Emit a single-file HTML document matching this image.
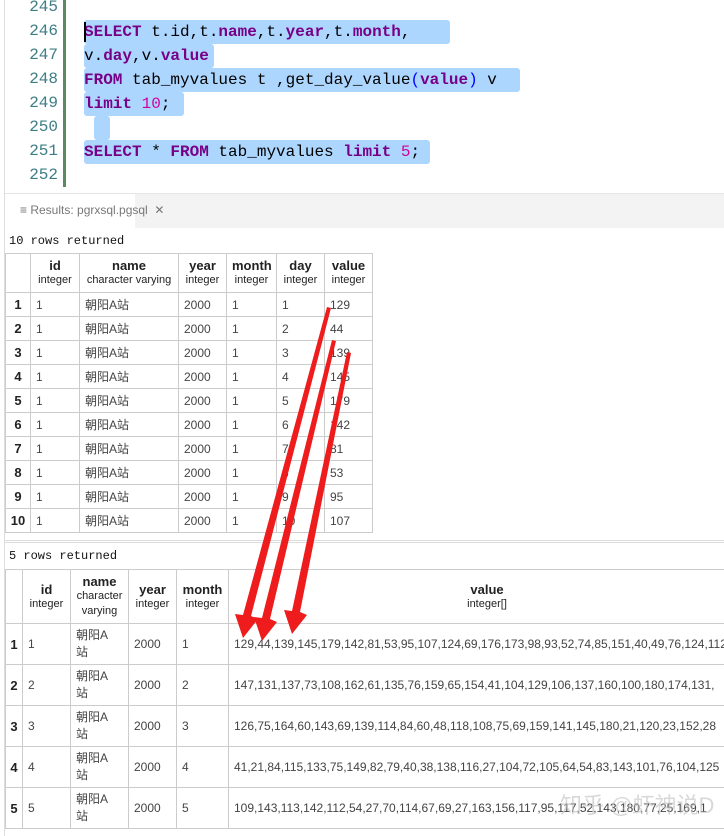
<!DOCTYPE html>
<html><head><meta charset="utf-8"><style>
*{margin:0;padding:0;box-sizing:border-box}
body{width:724px;height:836px;overflow:hidden;background:#fff;position:relative;font-family:"Liberation Sans","Noto Sans CJK SC",sans-serif;color:#333}
.ln{position:absolute;left:28px;width:30px;text-align:right;font:16px "Liberation Mono",monospace;color:#3d7d86;}
.code{position:absolute;left:84px;font:16px "Liberation Mono",monospace;color:#000;white-space:pre;height:24px;line-height:24px}
.sel{position:absolute;background:#add6ff;border-radius:3px}
.k{color:#770088;font-weight:bold}
.n{color:#d100a0}
.f{color:#0000ff}
table{position:absolute;border-collapse:collapse;font-size:12px;color:#444;table-layout:fixed}
td,th{border:1px solid #ccc;padding:0 5px;text-align:left;white-space:nowrap;overflow:hidden}
th{text-align:center;font-weight:bold;font-size:13px;color:#222;line-height:15px}
th span{display:block;font-weight:normal;font-size:11px;color:#222}
td.r{font-weight:bold;color:#222;font-size:13px;text-align:center;padding:0}
.mono{position:absolute;left:9px;font:12px "Liberation Mono",monospace;color:#111}
</style></head><body>
<div style="position:absolute;left:4px;top:0;width:1px;height:836px;background:#ddd"></div>
<div style="position:absolute;left:63px;top:0;width:3px;height:187px;background:#5b8a5e"></div>
<div class="sel" style="left:84px;top:20px;width:366px;height:24px"></div>
<div class="sel" style="left:84px;top:44px;width:130px;height:24px"></div>
<div class="sel" style="left:84px;top:68px;width:436px;height:24px"></div>
<div class="sel" style="left:84px;top:92px;width:100px;height:24px"></div>
<div class="sel" style="left:94px;top:116px;width:16px;height:24px"></div>
<div class="sel" style="left:84px;top:140px;width:346px;height:24px"></div>
<div class="ln" style="top:-2px">245</div>
<div class="ln" style="top:22px">246</div>
<div class="ln" style="top:46px">247</div>
<div class="ln" style="top:70px">248</div>
<div class="ln" style="top:94px">249</div>
<div class="ln" style="top:118px">250</div>
<div class="ln" style="top:142px">251</div>
<div class="ln" style="top:166px">252</div>
<div class="code" style="top:20px"><span class="k">SELECT</span> t.id,t.<span class="k">name</span>,t.<span class="k">year</span>,t.<span class="k">month</span>,</div>
<div class="code" style="top:44px">v.<span class="k">day</span>,v.<span class="k">value</span></div>
<div class="code" style="top:68px"><span class="k">FROM</span> tab_myvalues t ,get_day_value<span class="f">(</span><span class="k">value</span><span class="f">)</span> v</div>
<div class="code" style="top:92px"><span class="k">limit</span> <span class="n">10</span>;</div>
<div class="code" style="top:140px"><span class="k">SELECT</span> * <span class="k">FROM</span> tab_myvalues <span class="k">limit</span> <span class="n">5</span>;</div>
<div style="position:absolute;left:84px;top:22px;width:2px;height:20px;background:#000"></div>

<div style="position:absolute;left:5px;top:193px;width:719px;height:1px;background:#e5e5e5"></div>
<div style="position:absolute;left:135px;top:194px;width:589px;height:34px;background:#f3f3f3"></div>
<div style="position:absolute;left:20px;top:203px;font-size:12px;color:#777">≡ Results: pgrxsql.pgsql&nbsp; ✕</div>
<div class="mono" style="top:234px">10 rows returned</div>

<table style="left:5px;top:253px;width:367px">
<colgroup><col style="width:25px"><col style="width:49px"><col style="width:99px"><col style="width:48px"><col style="width:50px"><col style="width:48px"><col style="width:48px"></colgroup>
<tr style="height:39px"><th></th><th>id<span>integer</span></th><th>name<span>character varying</span></th><th>year<span>integer</span></th><th>month<span>integer</span></th><th>day<span>integer</span></th><th>value<span>integer</span></th></tr>
<tr style="height:24px"><td class="r">1</td><td>1</td><td>朝阳A站</td><td>2000</td><td>1</td><td>1</td><td>129</td></tr>
<tr style="height:24px"><td class="r">2</td><td>1</td><td>朝阳A站</td><td>2000</td><td>1</td><td>2</td><td>44</td></tr>
<tr style="height:24px"><td class="r">3</td><td>1</td><td>朝阳A站</td><td>2000</td><td>1</td><td>3</td><td>139</td></tr>
<tr style="height:24px"><td class="r">4</td><td>1</td><td>朝阳A站</td><td>2000</td><td>1</td><td>4</td><td>145</td></tr>
<tr style="height:24px"><td class="r">5</td><td>1</td><td>朝阳A站</td><td>2000</td><td>1</td><td>5</td><td>179</td></tr>
<tr style="height:24px"><td class="r">6</td><td>1</td><td>朝阳A站</td><td>2000</td><td>1</td><td>6</td><td>142</td></tr>
<tr style="height:24px"><td class="r">7</td><td>1</td><td>朝阳A站</td><td>2000</td><td>1</td><td>7</td><td>81</td></tr>
<tr style="height:24px"><td class="r">8</td><td>1</td><td>朝阳A站</td><td>2000</td><td>1</td><td>8</td><td>53</td></tr>
<tr style="height:24px"><td class="r">9</td><td>1</td><td>朝阳A站</td><td>2000</td><td>1</td><td>9</td><td>95</td></tr>
<tr style="height:24px"><td class="r">10</td><td>1</td><td>朝阳A站</td><td>2000</td><td>1</td><td>10</td><td>107</td></tr>
</table>
<div style="position:absolute;left:5px;top:540px;width:719px;height:3px;border-top:1px solid #ddd;border-bottom:1px solid #ddd"></div>
<div class="mono" style="top:549px">5 rows returned</div>

<table style="left:5px;top:569px;width:740px">
<colgroup><col style="width:17px"><col style="width:48px"><col style="width:58px"><col style="width:48px"><col style="width:52px"><col style="width:517px"></colgroup>
<tr style="height:54px"><th></th><th>id<span>integer</span></th><th style="padding:0">name<span>character</span><span>varying</span></th><th>year<span>integer</span></th><th>month<span>integer</span></th><th>value<span>integer[]</span></th></tr>
<tr style="height:41px"><td class="r">1</td><td>1</td><td style="white-space:normal;line-height:17px">朝阳A<br>站</td><td>2000</td><td>1</td><td>129,44,139,145,179,142,81,53,95,107,124,69,176,173,98,93,52,74,85,151,40,49,76,124,112</td></tr>
<tr style="height:41px"><td class="r">2</td><td>2</td><td style="white-space:normal;line-height:17px">朝阳A<br>站</td><td>2000</td><td>2</td><td>147,131,137,73,108,162,61,135,76,159,65,154,41,104,129,106,137,160,100,180,174,131,</td></tr>
<tr style="height:41px"><td class="r">3</td><td>3</td><td style="white-space:normal;line-height:17px">朝阳A<br>站</td><td>2000</td><td>3</td><td>126,75,164,60,143,69,139,114,84,60,48,118,108,75,69,159,141,145,180,21,120,23,152,28</td></tr>
<tr style="height:41px"><td class="r">4</td><td>4</td><td style="white-space:normal;line-height:17px">朝阳A<br>站</td><td>2000</td><td>4</td><td>41,21,84,115,133,75,149,82,79,40,38,138,116,27,104,72,105,64,54,83,143,101,76,104,125</td></tr>
<tr style="height:41px"><td class="r">5</td><td>5</td><td style="white-space:normal;line-height:17px">朝阳A<br>站</td><td>2000</td><td>5</td><td>109,143,113,142,112,54,27,70,114,67,69,27,163,156,117,95,117,52,143,180,77,25,169,1</td></tr>
</table>
<div style="position:absolute;left:560px;top:788px;font-size:22px;color:rgba(190,190,190,0.6)">知乎 @虾神说D</div>

<svg style="position:absolute;left:0;top:0" width="724" height="836">
<g fill="#ee1c1c">
<polygon points="327,307 331,308 251,616 258,619 243,638 235,614 243,615"/>
<polygon points="332,340 336,341 270,619 277,622 262,641 254,617 262,618"/>
<polygon points="347,352 351,353 300,612 307,615 292,634 284,610 292,611"/>
</g>
</svg>
</body></html>
